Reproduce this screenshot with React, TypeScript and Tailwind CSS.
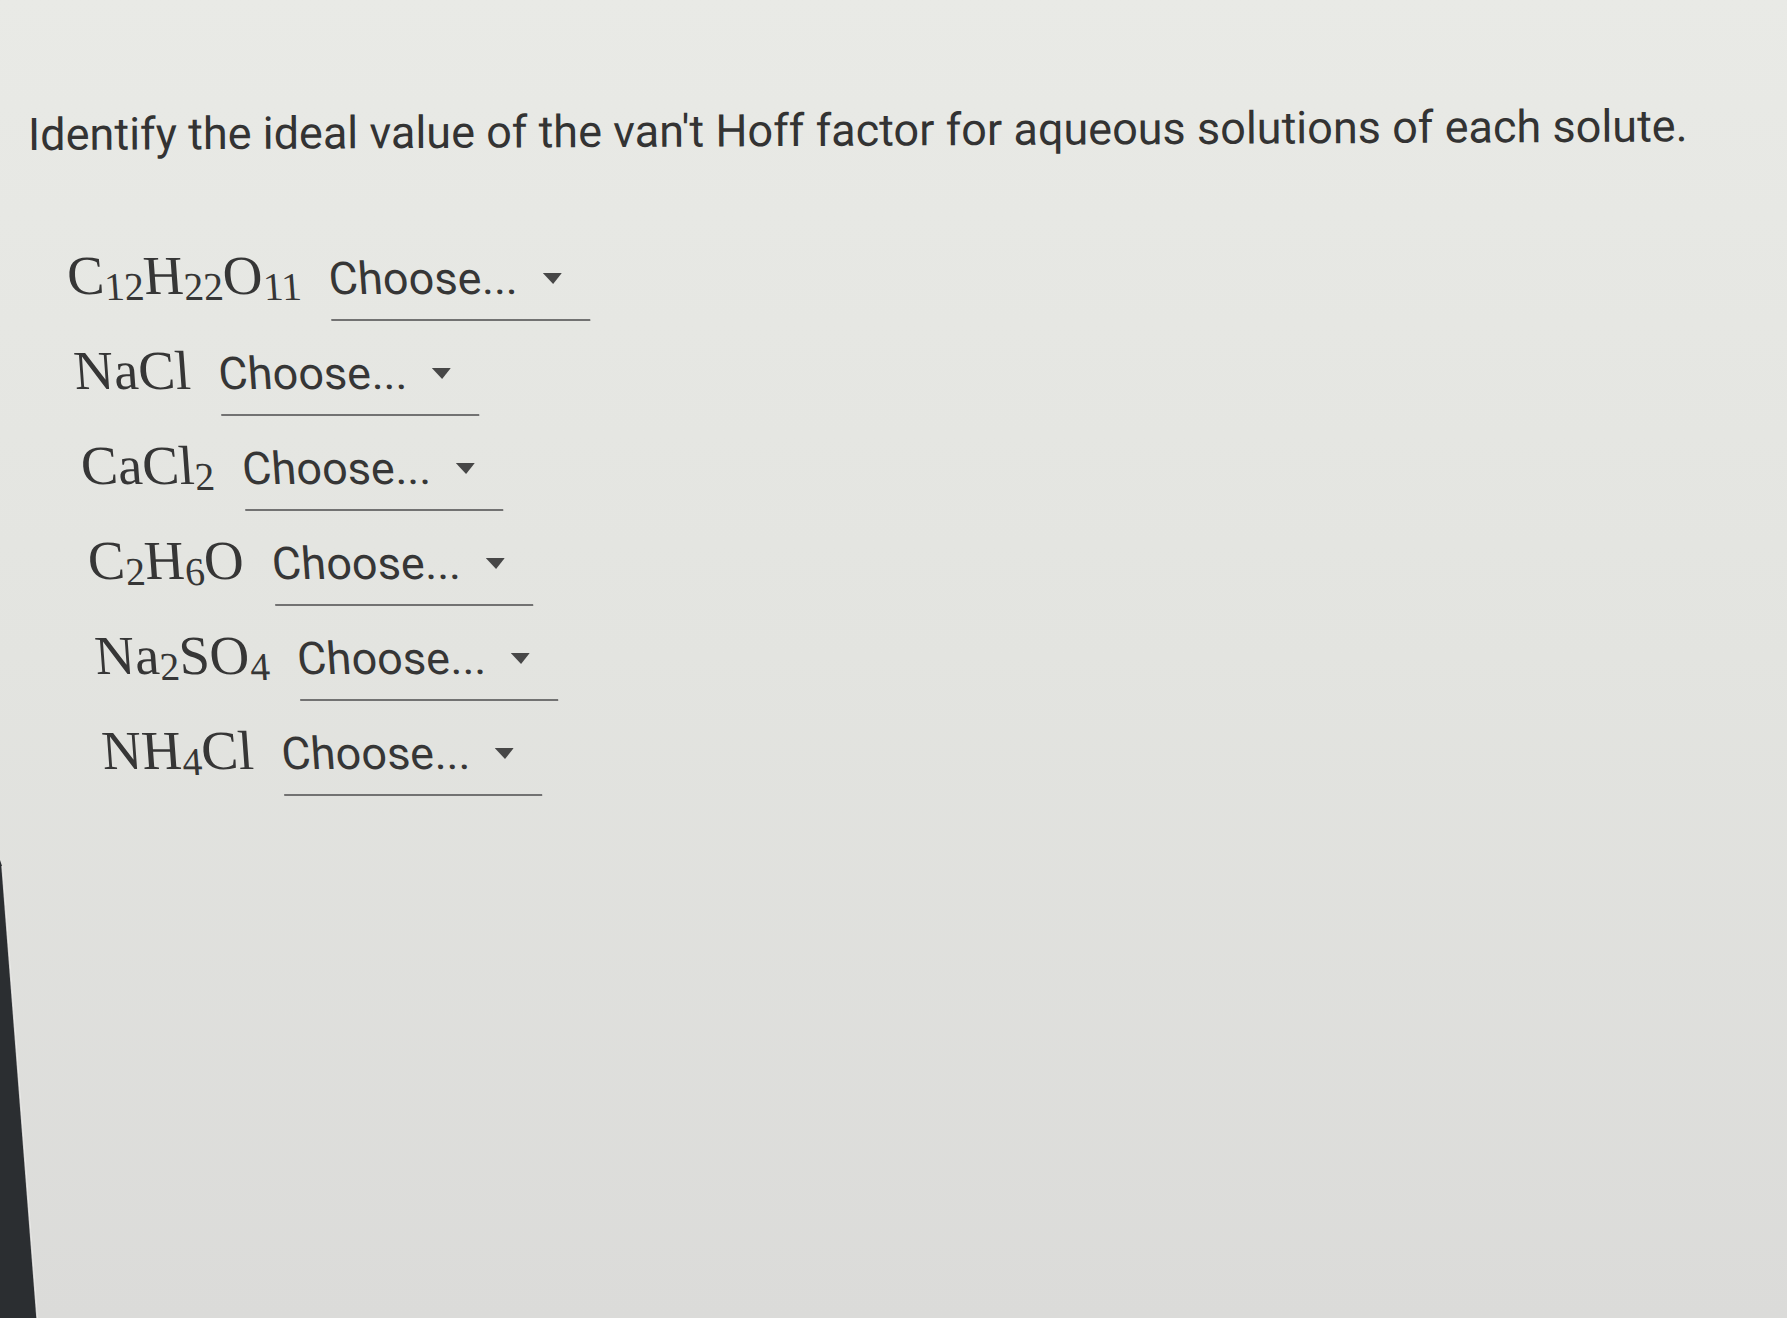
import React from "react";

type Part = { t: string; sub?: boolean };

const solutes: Part[][] = [
  [{ t: "C" }, { t: "12", sub: true }, { t: "H" }, { t: "22", sub: true }, { t: "O" }, { t: "11", sub: true }],
  [{ t: "NaCl" }],
  [{ t: "CaCl" }, { t: "2", sub: true }],
  [{ t: "C" }, { t: "2", sub: true }, { t: "H" }, { t: "6", sub: true }, { t: "O" }],
  [{ t: "Na" }, { t: "2", sub: true }, { t: "SO" }, { t: "4", sub: true }],
  [{ t: "NH" }, { t: "4", sub: true }, { t: "Cl" }],
];

function Formula({ parts }: { parts: Part[] }) {
  return (
    <span className="font-['Liberation_Serif',serif] text-[55px] leading-none text-[#363636]">
      {parts.map((p, i) =>
        p.sub ? (
          <span key={i} className="relative top-[0.15em] text-[0.72em] leading-none">
            {p.t}
          </span>
        ) : (
          <span key={i}>{p.t}</span>
        )
      )}
    </span>
  );
}

function ChooseSelect() {
  return (
    <div className="ml-[28px] inline-flex items-baseline border-b-2 border-[#727272] pb-[18px] pr-[25px] font-['Roboto',sans-serif] text-[45px] leading-none text-[#363636]">
      <span>Choose...</span>
      <svg className="ml-[26px] h-[11px] w-[19px] self-center" viewBox="0 0 19 11">
        <path d="M0 0 H19 L9.5 11 Z" fill="#474747" />
      </svg>
    </div>
  );
}

export default function App() {
  return (
    <div className="relative h-[1318px] w-full overflow-hidden bg-linear-to-b from-[#e9eae6] via-[#e3e4e0] to-[#dbdbd9]">
      <div className="px-[28px] pt-[112px]">
        <p className="origin-left -rotate-[0.3deg] whitespace-nowrap font-['Roboto',sans-serif] text-[45px] leading-none text-[#333333]">
          Identify the ideal value of the van't Hoff factor for aqueous solutions of each solute.
        </p>

        <div className="ml-[37px] mt-[91px] flex origin-top-left skew-x-[4.2deg] flex-col">
          {solutes.map((parts, i) => (
            <div key={i} className="flex h-[95px] items-baseline">
              <Formula parts={parts} />
              <ChooseSelect />
            </div>
          ))}
        </div>
      </div>

      {/* monitor bezel creeping in at the lower left */}
      <svg className="pointer-events-none absolute left-0 top-0" width="60" height="1318" viewBox="0 0 60 1318">
        <polygon points="0,860 2,866 37,1318 0,1318" fill="#2b2e31" />
        <polyline points="2,866 37,1318" stroke="#f2f1f0" strokeWidth="1.5" fill="none" opacity="0.8" />
      </svg>
    </div>
  );
}
